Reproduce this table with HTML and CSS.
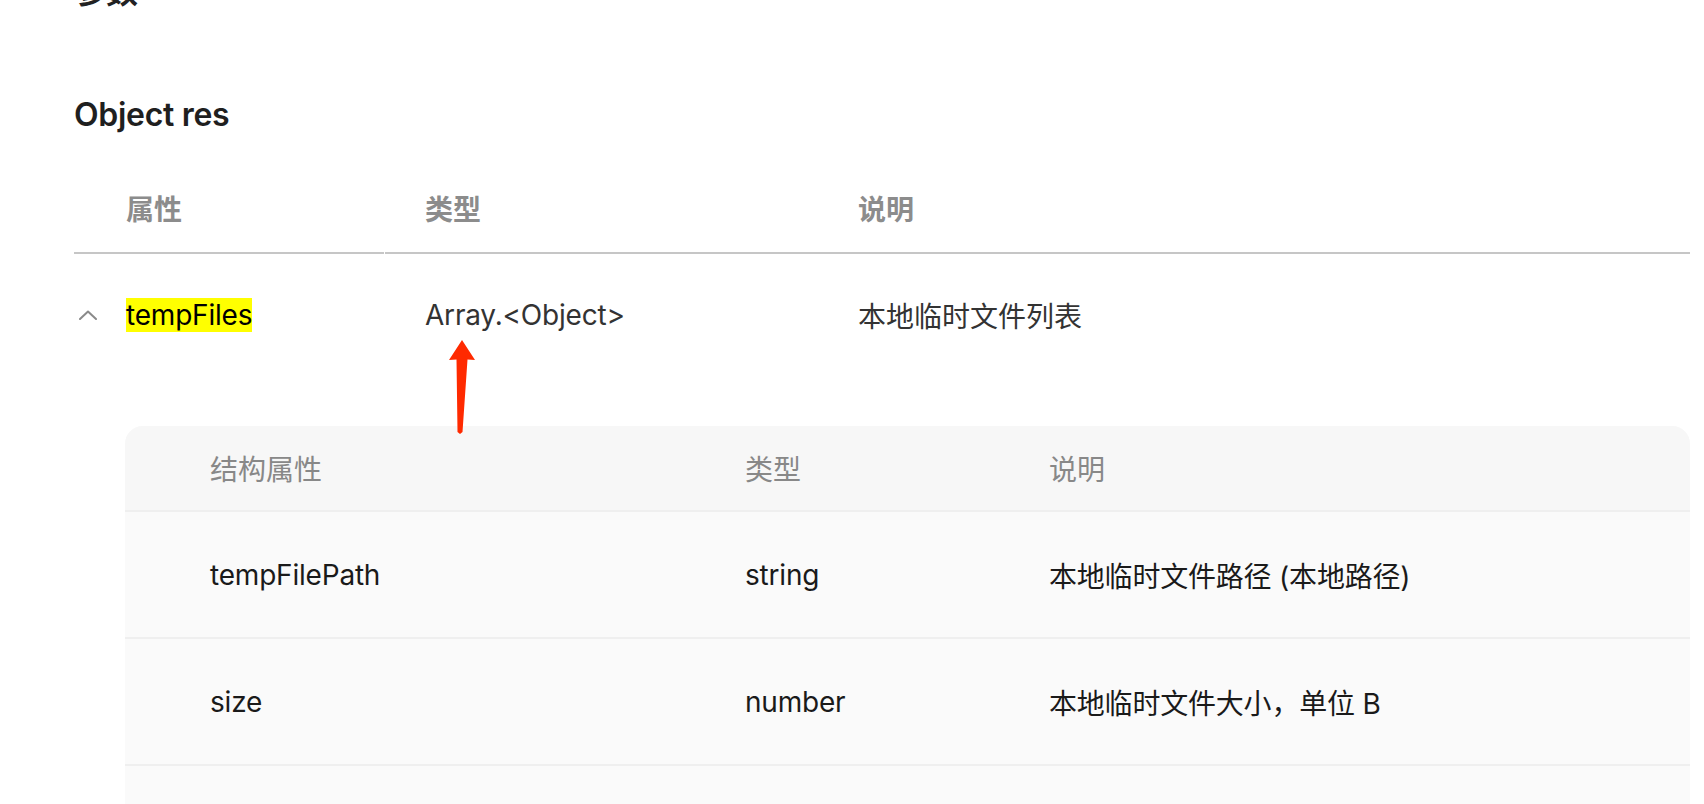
FILE: index.html
```html
<!DOCTYPE html>
<html lang="zh-CN">
<head>
<meta charset="utf-8">
<title>Object res</title>
<link rel="stylesheet" href="styles.css">
</head>
<body>
<main class="doc">
  <h2 class="section-title">参数</h2>
  <h3 class="obj-title">Object res</h3>

  <div class="props">
    <div class="props-head">
      <div class="ph ph-name">属性</div>
      <div class="ph">类型</div>
      <div class="ph">说明</div>
    </div>

    <div class="props-row">
      <div class="pc pc-name">
        <svg class="chevron" width="18" height="10" viewBox="0 0 18 10"><path d="M1 9 L9 1.5 L17 9" fill="none" stroke="#8a8a8a" stroke-width="2" stroke-linecap="round" stroke-linejoin="round"/></svg>
        <span class="hl">tempFiles</span>
      </div>
      <div class="pc pc-type">Array.&lt;Object&gt;</div>
      <div class="pc pc-desc">本地临时文件列表</div>
    </div>

    <div class="expand">
      <div class="sub">
        <div class="sub-head">
          <div class="sh sh-name">结构属性</div>
          <div class="sh">类型</div>
          <div class="sh">说明</div>
        </div>
        <div class="sub-row">
          <div class="sc sc-name">tempFilePath</div>
          <div class="sc">string</div>
          <div class="sc">本地临时文件路径 (本地路径)</div>
        </div>
        <div class="sub-row">
          <div class="sc sc-name">size</div>
          <div class="sc">number</div>
          <div class="sc">本地临时文件大小，单位 B</div>
        </div>
        <div class="sub-row">
          <div class="sc sc-name"></div>
          <div class="sc"></div>
          <div class="sc"></div>
        </div>
      </div>
    </div>
  </div>

  <svg class="annot-arrow" width="45" height="105" viewBox="0 0 45 105">
    <polygon points="22,5 35,25 27.5,24.5 22.5,97 20,99 17.5,97 16.5,24.5 9,25" fill="#ff2a00"/>
  </svg>
</main>
</body>
</html>
```

FILE: styles.css
```css
html, body {
  margin: 0;
  padding: 0;
  background: #ffffff;
  overflow: hidden;
}

body {
  font-family: Inter, "Noto Sans CJK SC", sans-serif;
  color: #222;
}

.doc {
  position: relative;
  display: flow-root;
  padding: 0 14px 0 74px;
}

.section-title {
  margin: -30px 0 0;
  font-size: 32px;
  line-height: 44px;
  font-weight: 700;
  color: #222;
}

.obj-title {
  margin: 81px 0 0;
  font-size: 32px;
  line-height: 40px;
  font-weight: 600;
  letter-spacing: -0.3px;
  color: #1f1f1f;
}

.props {
  margin-top: 31px;
}

.props-head,
.props-row {
  display: grid;
  grid-template-columns: 311px 433px 1fr;
}

.ph {
  height: 86px;
  display: flex;
  align-items: center;
  padding-left: 40px;
  padding-bottom: 2px;
  box-sizing: border-box;
  border-bottom: 2px solid #c6c6c6;
  height: 88px;
  font-size: 28px;
  font-weight: 600;
  color: #8c8c8c;
}

.ph-name {
  padding-left: 52px;
  margin-right: 1px;
}

.pc {
  height: 124px;
  display: flex;
  align-items: center;
  padding-left: 40px;
  padding-bottom: 2px;
  box-sizing: border-box;
  font-size: 28px;
  letter-spacing: -0.2px;
  color: #333;
}

.pc-name {
  padding-left: 0;
}

.pc-desc {
  letter-spacing: 0;
}

.chevron {
  display: block;
  margin: 0 29px 0 5px;
  flex: none;
}

.hl {
  background: #ffff00;
  color: #000;
}

.expand {
  padding: 48px 0 0 51px;
}

.sub {
  border-radius: 18px 18px 0 0;
  overflow: hidden;
  background: #fafafa;
}

.sub-head,
.sub-row {
  display: grid;
  grid-template-columns: 580px 304px 1fr;
  border-bottom: 2px solid #efefef;
}

.sub-head {
  background: #f7f7f7;
  height: 84px;
}

.sub-row {
  height: 125px;
}

.sh,
.sc {
  display: flex;
  align-items: center;
  padding-left: 40px;
  font-size: 28px;
}

.sh {
  color: #888;
  font-weight: 400;
}

.sc {
  color: #1a1a1a;
  letter-spacing: -0.2px;
}

.sh-name,
.sc-name {
  padding-left: 85px;
}

.annot-arrow {
  position: absolute;
  left: 440px;
  top: 335px;
}
```
